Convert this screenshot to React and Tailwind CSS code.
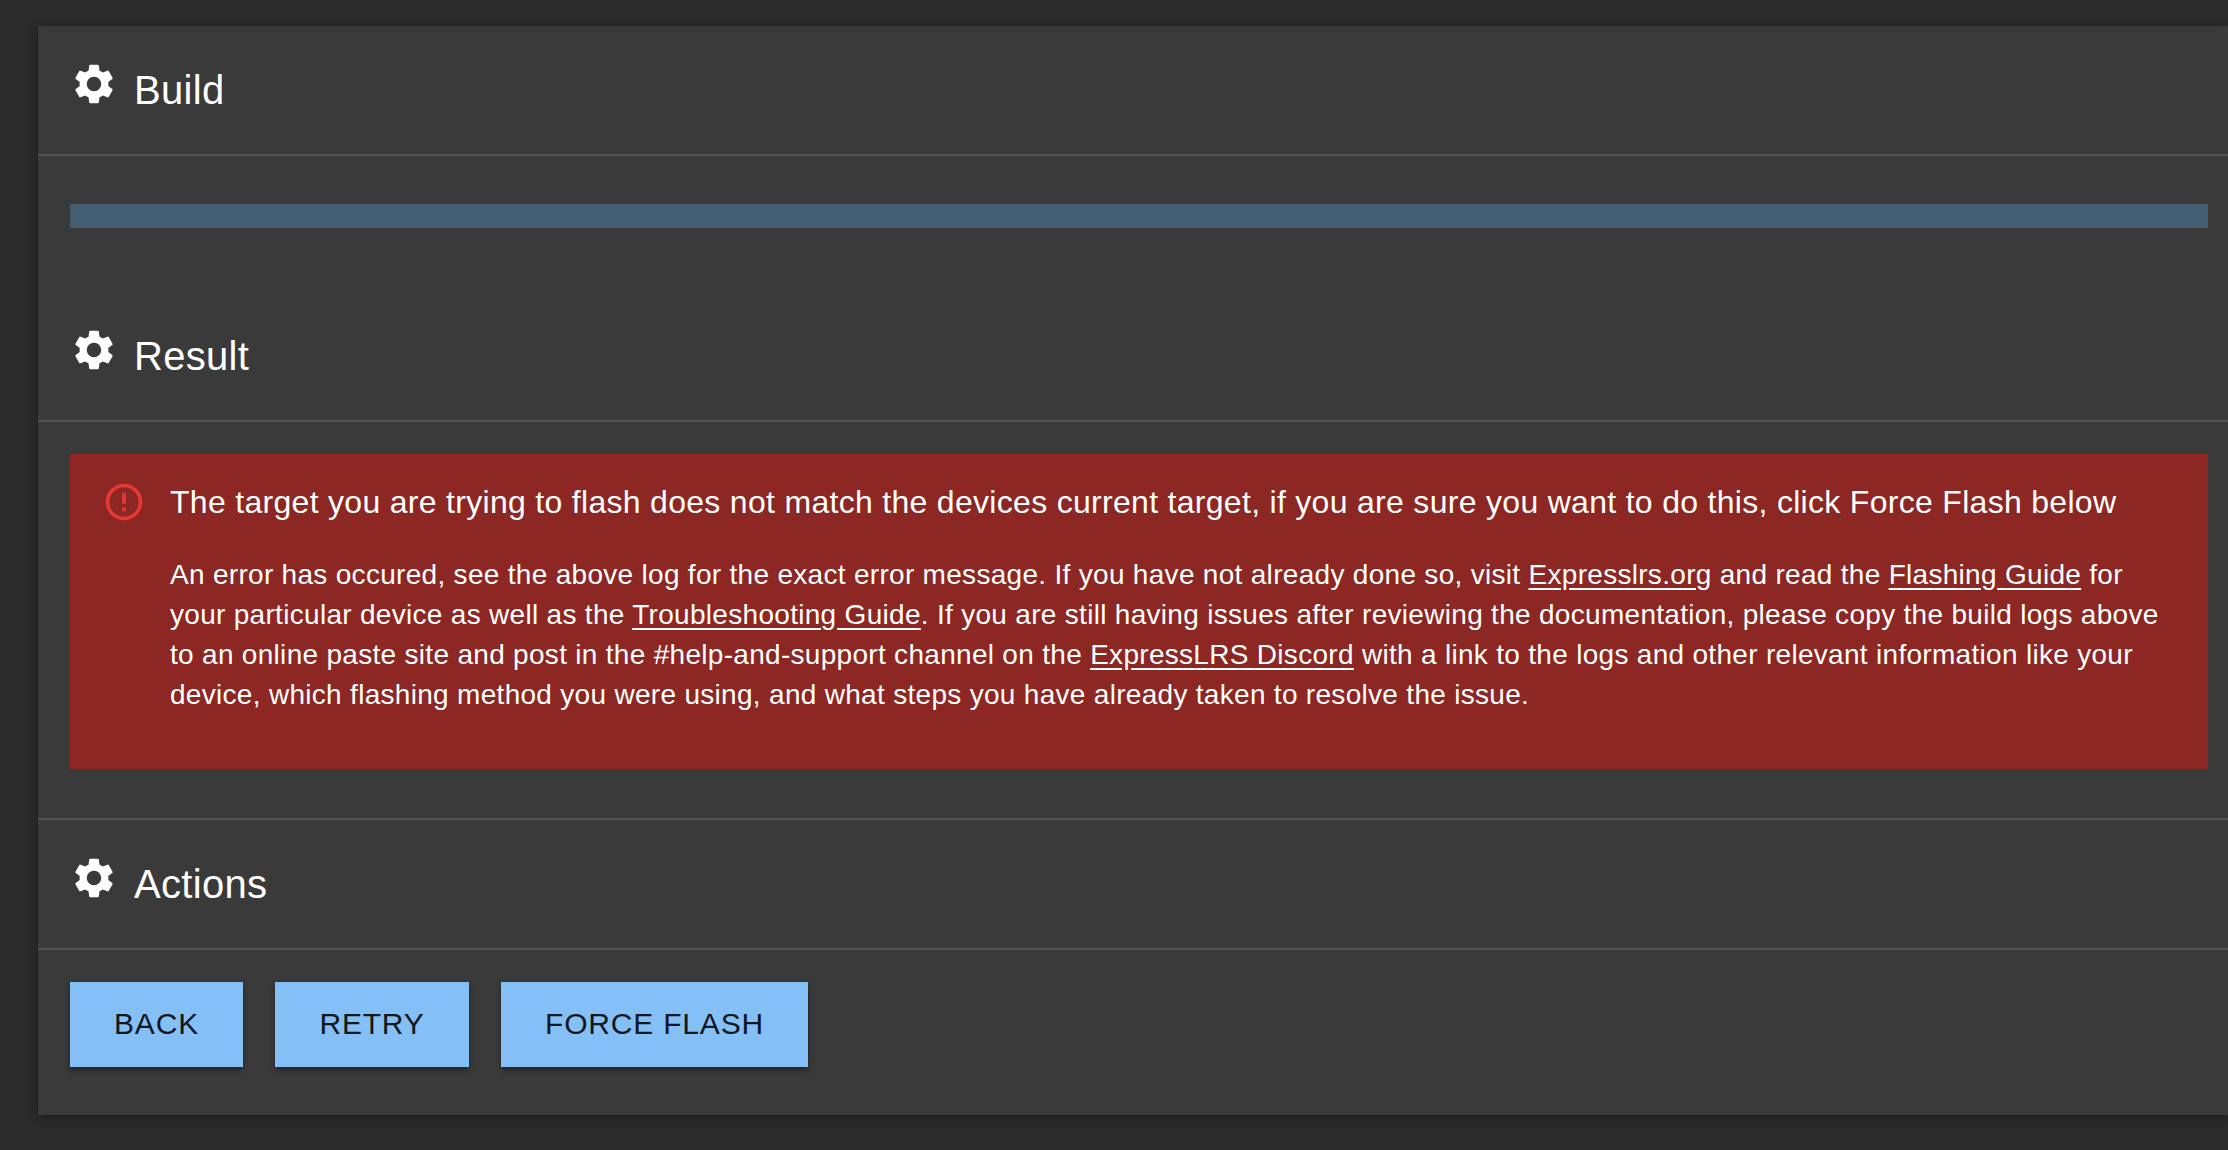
import React from "react";

const gearPath =
  "M19.14 12.94c.04-.3.06-.61.06-.94 0-.32-.02-.64-.07-.94l2.03-1.58c.18-.14.23-.41.12-.61l-1.92-3.32c-.12-.22-.37-.29-.59-.22l-2.39.96c-.5-.38-1.03-.7-1.62-.94l-.36-2.54c-.04-.24-.24-.41-.48-.41h-3.84c-.24 0-.43.17-.47.41l-.36 2.54c-.59.24-1.13.57-1.62.94l-2.39-.96c-.22-.08-.47 0-.59.22L2.74 8.87c-.12.21-.08.47.12.61l2.03 1.58c-.05.3-.09.63-.09.94s.02.64.07.94l-2.03 1.58c-.18.14-.23.41-.12.61l1.92 3.32c.12.22.37.29.59.22l2.39-.96c.5.38 1.03.7 1.62.94l.36 2.54c.05.24.24.41.48.41h3.84c.24 0 .44-.17.47-.41l.36-2.54c.59-.24 1.13-.56 1.62-.94l2.39.96c.22.08.47 0 .59-.22l1.92-3.32c.12-.22.07-.47-.12-.61l-2.01-1.58zM12 15.6c-1.98 0-3.6-1.62-3.6-3.6s1.62-3.6 3.6-3.6 3.6 1.62 3.6 3.6-1.62 3.6-3.6 3.6z";

const SectionHeader = ({ title }) => (
  <div className="h-[130px] border-b-2 border-[#525252] pl-8 pt-[34px] flex items-start">
    <svg viewBox="0 0 24 24" className="w-12 h-12 fill-white shrink-0">
      <path d={gearPath} />
    </svg>
    <h2 className="ml-4 text-[40px] leading-[60px] tracking-[0.3px] text-white">{title}</h2>
  </div>
);

const Link = ({ children }) => <a className="underline underline-offset-[4px]">{children}</a>;

const Button = ({ children, width }) => (
  <button className={`${width} h-[85px] pb-[2px] bg-[#84bff5] text-[#0f1720] text-[30px] tracking-[0.8px] uppercase shadow-[0_3px_6px_rgba(0,0,0,0.4)]`}>
    {children}
  </button>
);

const App = () => {
  return (
    <div className="min-h-screen overflow-hidden bg-[#2a2a2a] pt-[26px] pl-[38px] font-['Liberation_Sans',Arial,sans-serif]">
      <div className="bg-[#3a3a3a] shadow-[0_2px_8px_rgba(0,0,0,0.35)]">
        <SectionHeader title="Build" />
        <div className="pl-8 pr-5 pt-12 pb-16">
          <div className="h-6 bg-[#425c72]"></div>
        </div>

        <SectionHeader title="Result" />
        <div className="pl-8 pr-5 pt-8 pb-[49px] border-b-2 border-[#525252]">
          <div className="h-[315px] bg-[#8c2723] pl-8 pr-10 pt-[26px] flex text-white">
            <svg viewBox="0 0 24 24" className="w-11 h-11 fill-[#e53935] shrink-0">
              <path d="M11 15h2v2h-2zm0-8h2v6h-2zm.99-5C6.47 2 2 6.48 2 12s4.47 10 9.99 10C17.52 22 22 17.52 22 12S17.52 2 11.99 2zM12 20c-4.42 0-8-3.58-8-8s3.58-8 8-8 8 3.58 8 8-3.58 8-8 8z" />
            </svg>
            <div className="ml-6 min-w-0">
              <div className="text-[32px] leading-[44px] tracking-[0.3px] mb-[31px]">
                The target you are trying to flash does not match the devices current target, if you are sure you want to do this, click Force Flash below
              </div>
              <p className="text-[28px] leading-[40px] tracking-[0.3px]">
                An error has occured, see the above log for the exact error message. If you have not already done so, visit{" "}
                <Link>Expresslrs.org</Link> and read the <Link>Flashing Guide</Link> for your particular device as well as the{" "}
                <Link>Troubleshooting Guide</Link>. If you are still having issues after reviewing the documentation, please copy the build logs above to an online paste site and post in the #help-and-support channel on the{" "}
                <Link>ExpressLRS Discord</Link> with a link to the logs and other relevant information like your device, which flashing method you were using, and what steps you have already taken to resolve the issue.
              </p>
            </div>
          </div>
        </div>

        <SectionHeader title="Actions" />
        <div className="pl-8 pt-8 pb-12 flex gap-8">
          <Button width="w-[173px]">Back</Button>
          <Button width="w-[194px]">Retry</Button>
          <Button width="w-[307px]">Force Flash</Button>
        </div>
      </div>
    </div>
  );
};

export default App;
